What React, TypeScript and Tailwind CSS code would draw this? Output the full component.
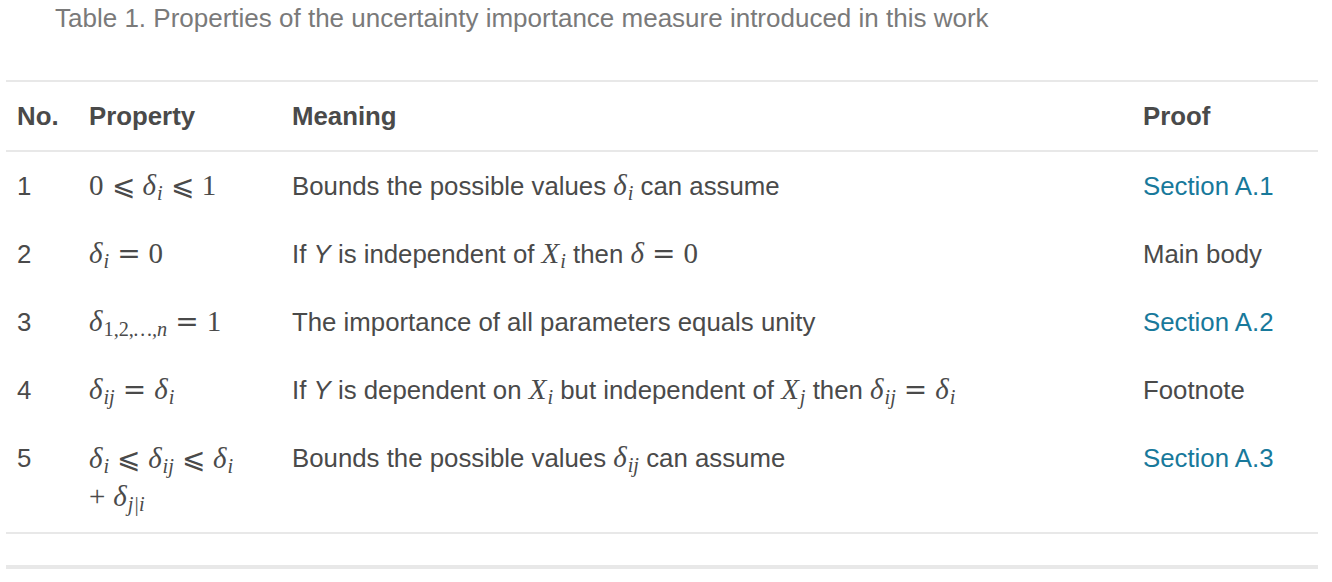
import React from 'react';

// Small helpers for the serif math bits
function V({ children }: { children: React.ReactNode }) {
    return <span className="italic">{children}</span>;
}

function Sub({ children }: { children: React.ReactNode }) {
    return <span className="relative top-[0.24em] ml-[1px] italic text-[0.7em] leading-none">{children}</span>;
}

function Math({ children }: { children: React.ReactNode }) {
    return (
        <span className="font-['Liberation_Serif','DejaVu_Serif',serif] text-[29px] leading-none whitespace-nowrap">
            {children}
        </span>
    );
}

function Op({ children }: { children: React.ReactNode }) {
    return <span className="px-[8px] font-['DejaVu_Serif','Liberation_Serif',serif] text-[28px] leading-none">{children}</span>;
}

const Delta = ({ sub }: { sub?: React.ReactNode }) => (
    <>
        <V>δ</V>
        {sub && <Sub>{sub}</Sub>}
    </>
);

interface Row {
    no: string;
    property: React.ReactNode;
    meaning: React.ReactNode;
    proof: string;
    link: boolean;
}

const rows: Row[] = [
    {
        no: '1',
        property: (
            <Math>
                0<Op>⩽</Op>
                <Delta sub="i" />
                <Op>⩽</Op>1
            </Math>
        ),
        meaning: (
            <>
                Bounds the possible values <Math><Delta sub="i" /></Math> can assume
            </>
        ),
        proof: 'Section A.1',
        link: true
    },
    {
        no: '2',
        property: (
            <Math>
                <Delta sub="i" />
                <Op>=</Op>0
            </Math>
        ),
        meaning: (
            <>
                If <span className="italic">Y</span> is independent of{' '}
                <Math>
                    <V>X</V>
                    <Sub>i</Sub>
                </Math>{' '}
                then{' '}
                <Math>
                    <V>δ</V>
                    <Op>=</Op>0
                </Math>
            </>
        ),
        proof: 'Main body',
        link: false
    },
    {
        no: '3',
        property: (
            <Math>
                <V>δ</V>
                <Sub>
                    <span className="not-italic">1,2,</span>…,n
                </Sub>
                <Op>=</Op>1
            </Math>
        ),
        meaning: 'The importance of all parameters equals unity',
        proof: 'Section A.2',
        link: true
    },
    {
        no: '4',
        property: (
            <Math>
                <Delta sub="ij" />
                <Op>=</Op>
                <Delta sub="i" />
            </Math>
        ),
        meaning: (
            <>
                If <span className="italic">Y</span> is dependent on{' '}
                <Math>
                    <V>X</V>
                    <Sub>i</Sub>
                </Math>{' '}
                but independent of{' '}
                <Math>
                    <V>X</V>
                    <Sub>j</Sub>
                </Math>{' '}
                then{' '}
                <Math>
                    <Delta sub="ij" />
                    <Op>=</Op>
                    <Delta sub="i" />
                </Math>
            </>
        ),
        proof: 'Footnote',
        link: false
    },
    {
        no: '5',
        property: (
            <span className="flex flex-col leading-[38px]">
                <span>
                    <Math>
                        <Delta sub="i" />
                        <Op>⩽</Op>
                        <Delta sub="ij" />
                        <Op>⩽</Op>
                        <Delta sub="i" />
                    </Math>
                </span>
                <span>
                    <Math>
                        <span className="pr-[8px]">+</span>
                        <Delta sub="j|i" />
                    </Math>
                </span>
            </span>
        ),
        meaning: (
            <>
                Bounds the possible values <Math><Delta sub="ij" /></Math> can assume
            </>
        ),
        proof: 'Section A.3',
        link: true
    }
];

export default function App() {
    return (
        <div className="w-[1332px] h-[582px] bg-white font-['Liberation_Sans',Arial,sans-serif] text-[#4a4a4a] overflow-hidden">
            {/* Caption */}
            <p className="pl-[55px] pt-[3px] text-[26px] leading-[30px] text-[#7a7a7a]">
                Table 1. Properties of the uncertainty importance measure introduced in this work
            </p>

            {/* Table */}
            <div className="mt-[47px] mx-[6px] w-[1312px]">
                <table className="w-full border-collapse text-[25.8px] text-left">
                    <thead>
                        <tr className="border-t-2 border-b-2 border-[#e8e8e8]">
                            <th className="w-[72px] pl-[11px] h-[70px] font-bold">No.</th>
                            <th className="w-[203px] pl-[11px] font-bold">Property</th>
                            <th className="pl-[11px] font-bold">Meaning</th>
                            <th className="w-[186px] pl-[11px] font-bold">Proof</th>
                        </tr>
                    </thead>
                    <tbody>
                        {rows.map((row) => (
                            <tr key={row.no} className="align-top leading-[36px]">
                                <td className="pl-[11px] py-[16px]">{row.no}</td>
                                <td className="pl-[11px] py-[16px]">{row.property}</td>
                                <td className="pl-[11px] py-[16px]">{row.meaning}</td>
                                <td className={`pl-[11px] py-[16px] ${row.link ? 'text-[#18799b]' : ''}`}>
                                    {row.proof}
                                </td>
                            </tr>
                        ))}
                    </tbody>
                    <tfoot>
                        <tr className="border-t-2 border-b-4 border-[#e8e8e8]">
                            <td colSpan={4} className="h-[34px]"></td>
                        </tr>
                    </tfoot>
                </table>
            </div>
        </div>
    );
}
